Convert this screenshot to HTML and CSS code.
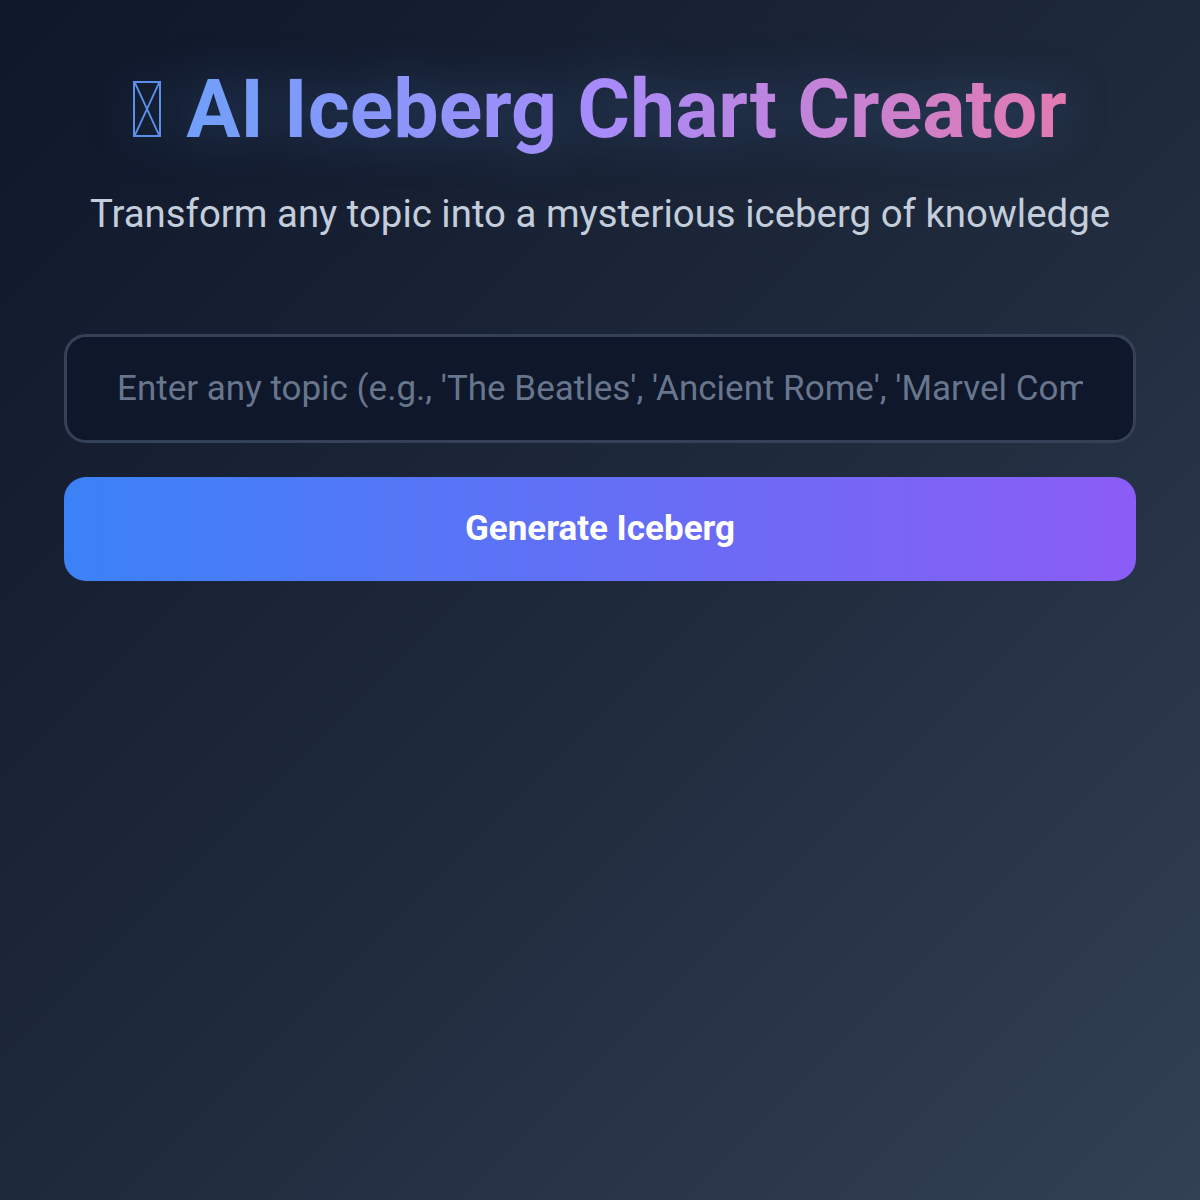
FILE: index.html
```html
<!DOCTYPE html>
<html lang="en">
<head>
<meta charset="utf-8">
<title>AI Iceberg Chart Creator</title>
<link rel="stylesheet" href="styles.css">
</head>
<body>
<main class="page">
  <header class="hero">
    <h1 class="title"><svg class="tofu" width="28" height="56" viewBox="0 0 28 56" aria-hidden="true"><rect x="1" y="1" width="26" height="54" fill="none" stroke="#5b8fe9" stroke-width="2"/><path d="M2 2 L26 54 M26 2 L2 54" stroke="#5b8fe9" stroke-width="1.8" fill="none"/></svg> AI Iceberg Chart Creator</h1>
    <p class="subtitle">Transform any topic into a mysterious iceberg of knowledge</p>
  </header>
  <form class="form">
    <input class="topic" type="text" placeholder="Enter any topic (e.g., 'The Beatles', 'Ancient Rome', 'Marvel Comics')">
    <button class="generate" type="button">Generate Iceberg</button>
  </form>
</main>
</body>
</html>
```

FILE: styles.css
```css
* { box-sizing: border-box; }
html, body { margin: 0; height: 100%; }
body {
  min-height: 1200px;
  font-family: Roboto, "Noto Sans", "Liberation Sans", sans-serif;
  background: linear-gradient(135deg, #0f172a 0%, #1e293b 50%, #334155 100%);
  color: #e2e8f0;
}
.page {
  padding: 64px 64px;
  display: flex;
  flex-direction: column;
}
.hero {
  text-align: center;
  margin-bottom: 95px;
}
.title {
  margin: 0;
  font-size: 80.7px;
  font-weight: 700;
  line-height: 1.15;
  background: linear-gradient(90deg, #60a5fa 0%, #a78bfa 50%, #ec77a6 100%);
  -webkit-background-clip: text;
  background-clip: text;
  color: transparent;
  filter: drop-shadow(0 0 24px rgba(96, 165, 250, 0.25));
}
.tofu {
  vertical-align: baseline;
  margin-right: 5px;
}
.subtitle {
  margin: 32px 0 0;
  font-size: 38.4px;
  line-height: 1.3;
  color: #c4cddb;
}
.form {
  display: flex;
  flex-direction: column;
  gap: 34px;
}
.topic {
  width: 100%;
  height: 109px;
  padding: 0 50px;
  font-family: inherit;
  font-size: 35px;
  color: #e2e8f0;
  background: #0f172a;
  border: 3px solid #354156;
  border-radius: 22px;
  outline: none;
}
.topic::placeholder { color: #67768c; }
.generate {
  height: 104px;
  font-family: inherit;
  font-size: 35px;
  font-weight: 700;
  color: #ffffff;
  border: none;
  border-radius: 22px;
  background: linear-gradient(90deg, #3b82f6 0%, #8b5cf6 100%);
  cursor: pointer;
}
```
